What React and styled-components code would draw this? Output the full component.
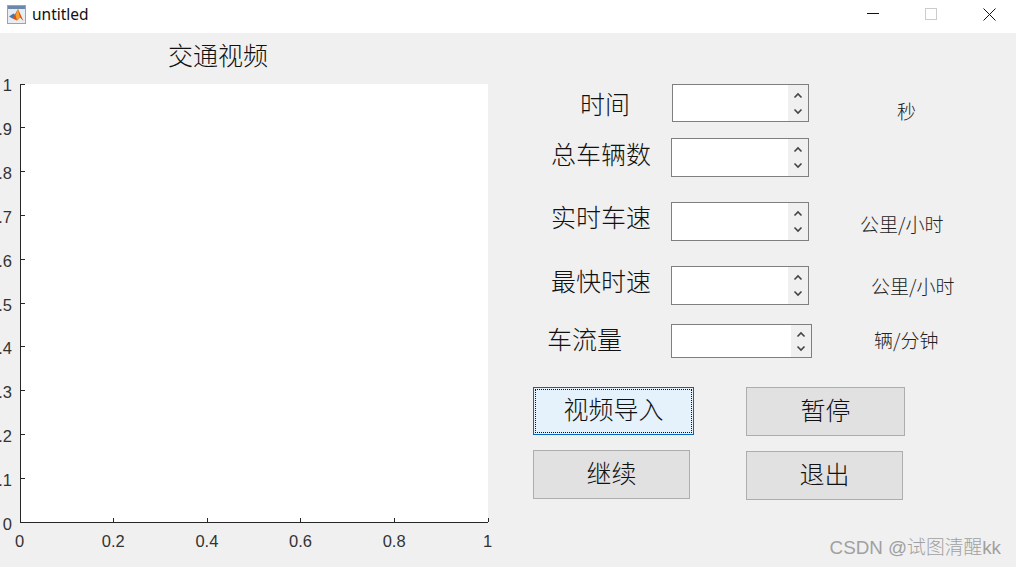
import React from "react";
import styled, { createGlobalStyle } from "styled-components";

const CJK = `"Noto Sans CJK SC", sans-serif`;

const GlobalStyle = createGlobalStyle`
  html, body {
    margin: 0;
    padding: 0;
    background: #f0f0f0;
  }
  * {
    box-sizing: border-box;
  }
`;

const Page = styled.div`
  position: relative;
  width: 1016px;
  height: 567px;
  overflow: hidden;
  display: flex;
  flex-direction: column;
  background: #f0f0f0;
`;

const TitleBar = styled.div`
  flex: 0 0 33px;
  display: flex;
  align-items: center;
  background: #fff;
  padding: 0 0 5px 7px;
`;

const WindowTitle = styled.span`
  margin-left: 6px;
  font: 15.5px "Noto Sans", sans-serif;
  color: #111;
`;

const WindowButtons = styled.div`
  margin: 0 -3px 0 auto;
  display: flex;
`;

const WindowButton = styled.div`
  width: 58.5px;
  height: 28px;
  display: flex;
  align-items: center;
  justify-content: center;
`;

const Body = styled.div`
  flex: 1;
  display: flex;
`;

const ChartColumn = styled.div`
  flex: 0 0 500px;
  display: flex;
  flex-direction: column;
`;

const ChartTitle = styled.div`
  height: 42px;
  padding-left: 168px;
  font: 300 25px/42px ${CJK};
  color: #111;
`;

const Controls = styled.div`
  flex: 1;
  display: flex;
  flex-direction: column;
`;

const Row = styled.div`
  display: grid;
  grid-template-columns: 171px 141px 1fr;
  grid-template-rows: ${(p) => p.$height}px;
  align-items: center;
  margin-top: ${(p) => p.$top}px;
`;

const Label = styled.div`
  padding-left: ${(p) => p.$left}px;
  margin-top: ${(p) => p.$shift || 0}px;
  font: 300 25px/30px ${CJK};
  color: #111;
  white-space: nowrap;
`;

const Unit = styled.div`
  padding-left: ${(p) => p.$left}px;
  margin-top: ${(p) => p.$shift || 0}px;
  font: 300 19px/24px ${CJK};
  color: #222;
  white-space: nowrap;
`;

const SpinBox = styled.div`
  display: flex;
  height: 100%;
  width: ${(p) => p.$width}px;
  margin-left: ${(p) => p.$left || 0}px;
  background: #fff;
  border: 1px solid #7f7f7f;
`;

const SpinField = styled.div`
  flex: 1;
`;

const SpinArrows = styled.div`
  flex: 0 0 20px;
  display: flex;
  flex-direction: column;
  align-items: center;
  justify-content: space-around;
  padding: 2px 0;
  background: #f0f0f0;
`;

const ButtonGrid = styled.div`
  display: grid;
  grid-template-columns: 213px 1fr;
  row-gap: 14px;
  margin: 29px 0 0 33px;
`;

const ActionButton = styled.button`
  width: ${(p) => p.$width}px;
  height: ${(p) => p.$height}px;
  margin-top: ${(p) => p.$top || 0}px;
  padding: 0 0 4px;
  background: #e1e1e1;
  border: 1px solid #adadad;
  font: 300 25px/1 ${CJK};
  color: #111;
`;

const FocusedButton = styled(ActionButton)`
  position: relative;
  padding-bottom: 6px;
  background: #e5f1fb;
  border-color: #0067c0;
  &::after {
    content: "";
    position: absolute;
    inset: 1px;
    border: 1px dotted #111;
  }
`;

const Watermark = styled.div`
  position: absolute;
  right: 15px;
  bottom: 6px;
  font: 300 18.8px/26px "Liberation Sans", ${CJK};
  color: #a0a0a0;
`;

const MatlabIcon = () => (
  <svg width="19" height="19" viewBox="0 0 19 19">
    <rect x="0.5" y="0.5" width="18" height="18" fill="#e9edf2" stroke="#9aa3ae" />
    <rect x="1" y="1" width="17" height="3" fill="#6a87ad" />
    <path d="M2 11.5 L6.5 8.5 L8.5 10 L5.5 13.5 Z" fill="#3f78b5" />
    <path d="M5.5 13.5 L11 4 L16.5 16 L13 12.5 L10 15.5 Z" fill="#d9501a" />
    <path d="M11 4 L8.5 10 L10 15.5 L13 12.5 Z" fill="#f2a22e" />
  </svg>
);

const SpinChevron = ({ up }) => (
  <svg width="10" height="7" viewBox="0 0 10 7">
    <path
      d={up ? "M1.5 5.5 L5 2 L8.5 5.5" : "M1.5 1.5 L5 5 L8.5 1.5"}
      fill="none"
      stroke="#444"
      strokeWidth="1.6"
    />
  </svg>
);

const Spinner = ({ width, left }) => (
  <SpinBox $width={width} $left={left}>
    <SpinField />
    <SpinArrows>
      <SpinChevron up />
      <SpinChevron />
    </SpinArrows>
  </SpinBox>
);

// axes area of the plot, in svg coordinates (svg starts at y=75 of the page)
const AX = { left: 20, right: 488, top: 9, bottom: 447 };
const AXIS = "#262626";

const tickText = {
  fontFamily: '"Liberation Sans", sans-serif',
  fontSize: 16.5,
  fill: "#333",
};

const Axes = () => {
  const w = AX.right - AX.left;
  const h = AX.bottom - AX.top;
  const yTicks = [1, 0.9, 0.8, 0.7, 0.6, 0.5, 0.4, 0.3, 0.2, 0.1, 0];
  const xTicks = [0, 0.2, 0.4, 0.6, 0.8, 1];
  return (
    <svg width="500" height="492" viewBox="0 0 500 492" style={{ display: "block" }}>
      <rect x={AX.left} y={AX.top} width={w} height={h} fill="#fff" />
      <path
        d={`M${AX.left + 0.5} ${AX.top} V${AX.bottom + 0.5} H${AX.right}`}
        fill="none"
        stroke={AXIS}
      />
      {yTicks.map((v) => {
        const y = Math.floor(AX.bottom - v * h) + 0.5;
        return (
          <g key={v}>
            <path d={`M${AX.left} ${y} h5`} stroke={AXIS} />
            <text x="12" y={v === 1 ? y + 6 : y + 7} textAnchor="end" {...tickText}>
              {v === 0 || v === 1 ? v : String(v).slice(1)}
            </text>
          </g>
        );
      })}
      {xTicks.map((v) => {
        const x = Math.floor(AX.left + v * w) + 0.5;
        return (
          <g key={v}>
            <path d={`M${x} ${AX.bottom} v-4`} stroke={AXIS} />
            <text x={AX.left + v * w - 0.3} y={AX.bottom + 25} textAnchor="middle" {...tickText}>
              {v}
            </text>
          </g>
        );
      })}
    </svg>
  );
};

export default function App() {
  return (
    <Page>
      <GlobalStyle />
      <TitleBar>
        <MatlabIcon />
        <WindowTitle>untitled</WindowTitle>
        <WindowButtons>
          <WindowButton>
            <svg width="12" height="12" viewBox="0 0 12 12">
              <path d="M0 5.5 H12" stroke="#111" />
            </svg>
          </WindowButton>
          <WindowButton>
            <svg width="12" height="12" viewBox="0 0 12 12">
              <rect x="0.5" y="0.5" width="11" height="11" fill="none" stroke="#ccc" />
            </svg>
          </WindowButton>
          <WindowButton>
            <svg width="13" height="13" viewBox="0 0 13 13">
              <path d="M0.5 0.5 L12.5 12.5 M12.5 0.5 L0.5 12.5" stroke="#111" />
            </svg>
          </WindowButton>
        </WindowButtons>
      </TitleBar>
      <Body>
        <ChartColumn>
          <ChartTitle>交通视频</ChartTitle>
          <Axes />
        </ChartColumn>
        <Controls>
          <Row $top={51} $height={38}>
            <Label $left={80} $shift={0}>时间</Label>
            <Spinner width={137} left={1} />
            <Unit $left={85} $shift={16}>秒</Unit>
          </Row>
          <Row $top={16} $height={39}>
            <Label $left={51} $shift={-10}>总车辆数</Label>
            <Spinner width={138} />
          </Row>
          <Row $top={25} $height={39}>
            <Label $left={51} $shift={-11}>实时车速</Label>
            <Spinner width={138} />
            <Unit $left={48} $shift={4}>公里/小时</Unit>
          </Row>
          <Row $top={25} $height={39}>
            <Label $left={51} $shift={-11}>最快时速</Label>
            <Spinner width={138} />
            <Unit $left={59} $shift={0}>公里/小时</Unit>
          </Row>
          <Row $top={19} $height={34}>
            <Label $left={47} $shift={-6}>车流量</Label>
            <Spinner width={141} />
            <Unit $left={62} $shift={-2}>辆/分钟</Unit>
          </Row>
          <ButtonGrid>
            <FocusedButton $width={161} $height={48}>视频导入</FocusedButton>
            <ActionButton $width={159} $height={49}>暂停</ActionButton>
            <ActionButton $width={157} $height={49}>继续</ActionButton>
            <ActionButton $width={157} $height={49} $top={1}>退出</ActionButton>
          </ButtonGrid>
        </Controls>
      </Body>
      <Watermark>CSDN @试图清醒kk</Watermark>
    </Page>
  );
}
